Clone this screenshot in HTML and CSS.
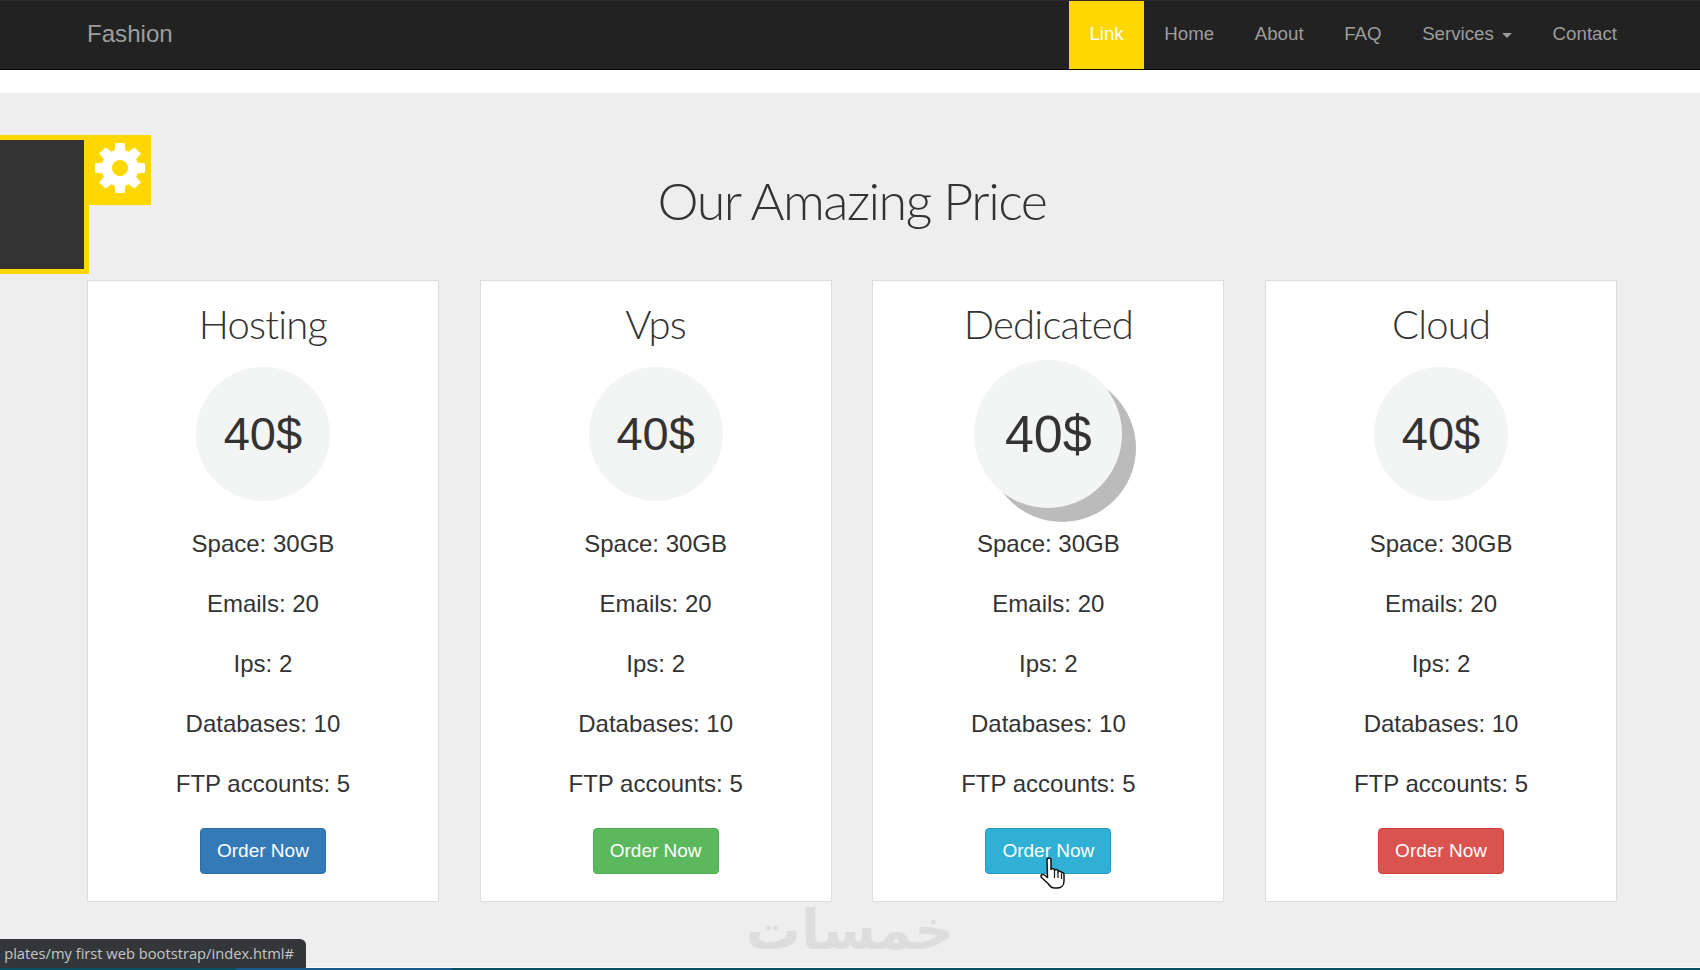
FILE: index.html
```html
<!DOCTYPE html>
<html lang="en">
<head>
    <meta charset="UTF-8">
    <title>Fashion</title>
    <link rel="stylesheet" href="styles.css">
</head>
<body>
    <nav class="navbar">
        <a class="brand" href="#">Fashion</a>
        <ul class="nav-links">
            <li><a class="active" href="#">Link</a></li>
            <li><a href="#">Home</a></li>
            <li><a href="#">About</a></li>
            <li><a href="#">FAQ</a></li>
            <li><a href="#">Services <span class="caret"></span></a></li>
            <li><a href="#">Contact</a></li>
        </ul>
    </nav>

    <section class="pricing">
        <div class="settings-box">
            <div class="settings-panel"></div>
            <div class="settings-gear">
                <svg width="50" height="50" viewBox="0 0 50 50">
                    <g fill="#fff">
                        <circle cx="25" cy="25" r="18.500"/>
                        <path d="M20.500 0h9l1 9h-11z"/>
                        <path d="M20.500 0h9l1 9h-11z" transform="rotate(45 25 25)"/>
                        <path d="M20.500 0h9l1 9h-11z" transform="rotate(90 25 25)"/>
                        <path d="M20.500 0h9l1 9h-11z" transform="rotate(135 25 25)"/>
                        <path d="M20.500 0h9l1 9h-11z" transform="rotate(180 25 25)"/>
                        <path d="M20.500 0h9l1 9h-11z" transform="rotate(225 25 25)"/>
                        <path d="M20.500 0h9l1 9h-11z" transform="rotate(270 25 25)"/>
                        <path d="M20.500 0h9l1 9h-11z" transform="rotate(315 25 25)"/>
                    </g>
                    <circle cx="25" cy="25" r="8" fill="#ffd700"/>
                </svg>
            </div>
        </div>

        <h2 class="section-title">Our Amazing Price</h2>

        <div class="plans">
            <div class="plan">
                <h3>Hosting</h3>
                <div class="price">40$</div>
                <p>Space: 30GB</p>
                <p>Emails: 20</p>
                <p>Ips: 2</p>
                <p>Databases: 10</p>
                <p>FTP accounts: 5</p>
                <a class="btn btn-primary" href="#">Order Now</a>
            </div>
            <div class="plan">
                <h3>Vps</h3>
                <div class="price">40$</div>
                <p>Space: 30GB</p>
                <p>Emails: 20</p>
                <p>Ips: 2</p>
                <p>Databases: 10</p>
                <p>FTP accounts: 5</p>
                <a class="btn btn-success" href="#">Order Now</a>
            </div>
            <div class="plan">
                <h3>Dedicated</h3>
                <div class="price price-hover">40$</div>
                <p>Space: 30GB</p>
                <p>Emails: 20</p>
                <p>Ips: 2</p>
                <p>Databases: 10</p>
                <p>FTP accounts: 5</p>
                <a class="btn btn-info" href="#">Order Now
                    <svg class="cursor" width="26" height="32" viewBox="0 0 26 32">
                        <path fill="#fff" stroke="#111" stroke-width="1.500" stroke-linejoin="round" d="M7 3c0-2.600 4-2.600 4 0v9.500c.5-1.500 3.500-1.500 3.500.5v.5c.5-1.500 3.500-1.500 3.500.5v1c.5-1.500 3.500-1.200 3.500 1 1-1 2.500-.2 2.500 1.500v6.500c0 4-2.500 7-6.500 7h-3c-3 0-4.500-1.500-6.500-4.500l-6.500-6c-1.500-2 1-4 3-2.500l3 2.500z"/>
                        <path fill="none" stroke="#111" stroke-width="1.200" d="M14.500 14v7M18 15v6M21.500 17v5"/>
                    </svg>
                </a>
            </div>
            <div class="plan">
                <h3>Cloud</h3>
                <div class="price">40$</div>
                <p>Space: 30GB</p>
                <p>Emails: 20</p>
                <p>Ips: 2</p>
                <p>Databases: 10</p>
                <p>FTP accounts: 5</p>
                <a class="btn btn-danger" href="#">Order Now</a>
            </div>
        </div>

        <div class="watermark" lang="ar" dir="rtl">خمسات</div>
        <div class="status-tip"><span>plates/my first web bootstrap/index.html#</span></div>
    </section>
    <div class="taskbar-line"></div>
</body>
</html>
```

FILE: styles.css
```css
* {
    margin: 0;
    padding: 0;
    box-sizing: border-box;
}

body {
    height: 970px;
    overflow: hidden;
    background: #fff;
    color: #333;
    font-family: "Liberation Sans", Arial, sans-serif;
}

a {
    text-decoration: none;
}

/* navbar */
.navbar {
    height: 70px;
    display: flex;
    justify-content: space-between;
    background: #222;
    border-top: 1px solid #2c2c2c;
    border-bottom: 1px solid #080808;
    padding: 0 62.700px 0 87px;
}

.brand {
    color: #9d9d9d;
    font-size: 24.100px;
    line-height: 66px;
}

.nav-links {
    display: flex;
    list-style: none;
}

.nav-links a {
    display: block;
    height: 68px;
    padding: 0 20.300px;
    color: #9d9d9d;
    font-size: 18.700px;
    line-height: 66px;
}

.nav-links .active {
    background: #ffd700;
    color: #fff;
}

.caret {
    display: inline-block;
    margin-left: 3px;
    vertical-align: middle;
    border-top: 5px solid #9d9d9d;
    border-left: 5px solid transparent;
    border-right: 5px solid transparent;
}

/* pricing */
.pricing {
    position: relative;
    height: 875px;
    margin-top: 23px;
    padding: 0 83px 0 87px;
    background: #eee;
    border-bottom: 1px solid #fafafa;
}

.settings-box {
    position: absolute;
    top: 42px;
    left: 0;
    display: flex;
    align-items: flex-start;
}

.settings-panel {
    width: 89px;
    height: 139px;
    background: #333;
    border: 5px solid #ffd700;
    border-left: 0;
}

.settings-gear {
    width: 62px;
    height: 70px;
    display: flex;
    align-items: center;
    justify-content: center;
    padding-bottom: 4px;
    background: #ffd700;
}

.section-title {
    padding-top: 76px;
    height: 187px;
    color: #333;
    font-family: Lato, sans-serif;
    font-size: 52px;
    font-weight: 300;
    letter-spacing: -1.500px;
    line-height: 62px;
    text-align: center;
}

.plans {
    display: grid;
    grid-template-columns: repeat(4, 1fr);
    column-gap: 40.800px;
}

.plan {
    height: 622px;
    padding-top: 16px;
    background: #fff;
    border: 1px solid #ddd;
    text-align: center;
}

.plan h3 {
    height: 70px;
    font-family: Lato, sans-serif;
    font-size: 40px;
    font-weight: 300;
    letter-spacing: -0.800px;
    line-height: 54px;
}

.price {
    width: 134px;
    height: 134px;
    margin: 0 auto 26px;
    border-radius: 50%;
    background: #f3f4f4;
    font-size: 47px;
    line-height: 134px;
}

.price-hover {
    width: 148px;
    height: 148px;
    margin-top: -7px;
    margin-bottom: 19px;
    font-size: 52px;
    line-height: 148px;
    box-shadow: 14px 14px 0 #bbb;
}

.plan p {
    height: 60px;
    font-size: 24px;
    line-height: 34px;
}

.btn {
    position: relative;
    display: inline-block;
    width: 126px;
    height: 46px;
    margin-top: 1px;
    border: 1px solid;
    border-radius: 4px;
    color: #fff;
    font-size: 19px;
    line-height: 43px;
}

.btn-primary {
    background: #337ab7;
    border-color: #2e6da4;
}

.btn-success {
    background: #5cb85c;
    border-color: #4cae4c;
}

.btn-info {
    background: #31b0d5;
    border-color: #269abc;
}

.btn-danger {
    background: #d9534f;
    border-color: #d43f3a;
}

.cursor {
    position: absolute;
    top: 28px;
    left: 54px;
}

/* bits of the recording on top of the page */
.watermark {
    position: absolute;
    top: 804px;
    left: 745px;
    width: 210px;
    color: #ddd;
    font-family: "DejaVu Sans", sans-serif;
    font-size: 55px;
    font-weight: 700;
    line-height: 66px;
    text-align: center;
    white-space: nowrap;
}

.status-tip {
    position: absolute;
    left: 0;
    bottom: -1px;
    width: 306px;
    height: 29px;
    display: flex;
    justify-content: flex-end;
    padding-right: 12px;
    background: #35363a;
    border-top-right-radius: 6px;
    color: #c4c7c5;
    font-family: "Open Sans", sans-serif;
    font-size: 14.700px;
    line-height: 29px;
    white-space: nowrap;
}

.taskbar-line {
    height: 2px;
    background: linear-gradient(to right, #0b4f63 236px, #1a5a8a 236px, #1a5a8a 452px, #0b4f63 452px);
}
```
